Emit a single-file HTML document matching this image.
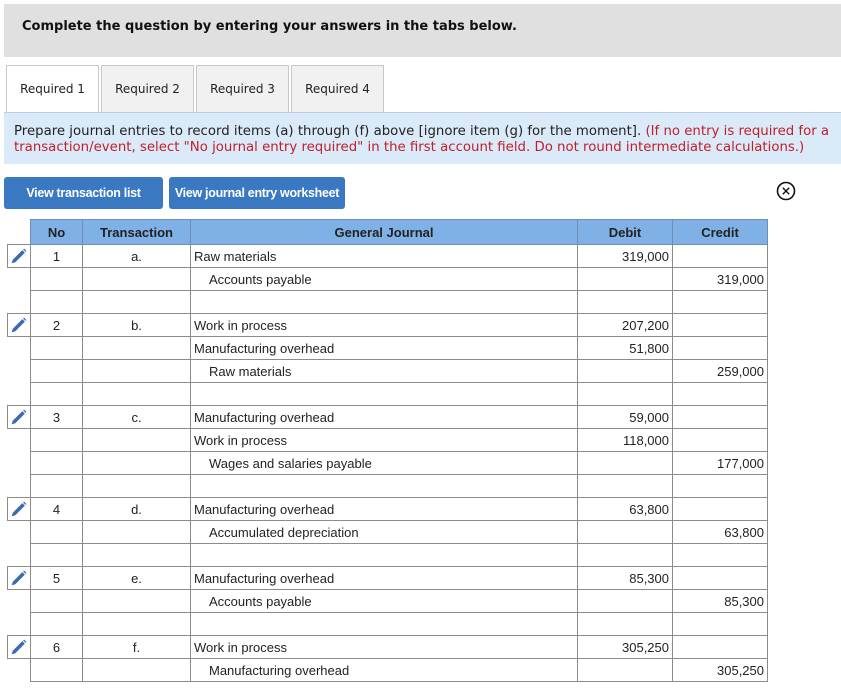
<!DOCTYPE html>
<html><head><style>
body{margin:0;background:#fff;width:841px;height:689px;overflow:hidden;position:relative;font-family:"DejaVu Sans",Verdana,sans-serif}
.top{position:absolute;left:4px;top:4px;width:837px;height:53px;background:#e0e0e0}
.top span{position:absolute;left:18px;top:15px;font-weight:bold;font-size:13px;color:#111}
.tab{position:absolute;top:65px;height:47px;border:1px solid #c8c8c8;border-bottom:none;background:#f1f1f1;font-size:12px;color:#222;box-sizing:border-box;text-align:center;line-height:47px}
.tab.a{background:#fff;height:48px}
.info{position:absolute;left:4px;top:112px;width:837px;height:52px;background:#dbeaf8;border-top:1px solid #b8cde0;box-sizing:border-box;font-size:13.3px;line-height:16px;padding:11px 0 0 10px;color:#222}
.info .r{color:#c0202a}
.btn{position:absolute;top:177px;height:32px;background:#3a78c2;border-radius:3px;color:#fff;font:bold 12.5px "Liberation Sans",Arial,sans-serif;line-height:32px;text-align:center;letter-spacing:-0.3px}
table{position:absolute;left:7px;top:219px;border-collapse:collapse;font:13px "Liberation Sans",Arial,sans-serif;color:#222}
td,th{border:1px solid #8c8c8c;height:23px;padding:0 3px;box-sizing:border-box}
th{background:#7fb0e6;font-weight:bold;height:25px;border-color:#6f8fb8}
tr td:first-child,tr th:first-child{border-left:none;border-top:none;border-bottom:none;background:#fff}
tr td.p{border:1px solid #8c8c8c}
th:first-child{background:#fff!important}
.c{text-align:center}.n{text-align:right}
.in{padding-left:18px}
</style></head><body>
<div class="top"><span>Complete the question by entering your answers in the tabs below.</span></div>
<div class="tab a" style="left:6px;width:93px">Required 1</div>
<div class="tab" style="left:101px;width:93px">Required 2</div>
<div class="tab" style="left:196px;width:93px">Required 3</div>
<div class="tab" style="left:291px;width:93px">Required 4</div>
<div class="info">Prepare journal entries to record items (a) through (f) above [ignore item (g) for the moment]. <span class="r">(If no entry is required for a transaction/event, select "No journal entry required" in the first account field. Do not round intermediate calculations.)</span></div>
<div class="btn" style="left:4px;width:159px">View transaction list</div>
<div class="btn" style="left:169px;width:176px">View journal entry worksheet</div>
<svg style="position:absolute;left:776px;top:181px" width="20" height="20"><circle cx="10" cy="10" r="8.5" fill="none" stroke="#111" stroke-width="1.6"/><path d="M6.8 6.8L13.2 13.2M13.2 6.8L6.8 13.2" stroke="#111" stroke-width="1.4"/></svg>
<table>
<colgroup><col style="width:23px"><col style="width:52px"><col style="width:108px"><col style="width:387px"><col style="width:95px"><col style="width:95px"></colgroup>
<tr><th></th><th>No</th><th>Transaction</th><th>General Journal</th><th>Debit</th><th>Credit</th></tr>
<tr><td>P</td><td class="c">1</td><td class="c">a.</td><td>Raw materials</td><td class="n">319,000</td><td></td></tr>
<tr><td></td><td></td><td></td><td class="in">Accounts payable</td><td></td><td class="n">319,000</td></tr>
<tr><td></td><td></td><td></td><td></td><td></td><td></td></tr>
<tr><td>P</td><td class="c">2</td><td class="c">b.</td><td>Work in process</td><td class="n">207,200</td><td></td></tr>
<tr><td></td><td></td><td></td><td>Manufacturing overhead</td><td class="n">51,800</td><td></td></tr>
<tr><td></td><td></td><td></td><td class="in">Raw materials</td><td></td><td class="n">259,000</td></tr>
<tr><td></td><td></td><td></td><td></td><td></td><td></td></tr>
<tr><td>P</td><td class="c">3</td><td class="c">c.</td><td>Manufacturing overhead</td><td class="n">59,000</td><td></td></tr>
<tr><td></td><td></td><td></td><td>Work in process</td><td class="n">118,000</td><td></td></tr>
<tr><td></td><td></td><td></td><td class="in">Wages and salaries payable</td><td></td><td class="n">177,000</td></tr>
<tr><td></td><td></td><td></td><td></td><td></td><td></td></tr>
<tr><td>P</td><td class="c">4</td><td class="c">d.</td><td>Manufacturing overhead</td><td class="n">63,800</td><td></td></tr>
<tr><td></td><td></td><td></td><td class="in">Accumulated depreciation</td><td></td><td class="n">63,800</td></tr>
<tr><td></td><td></td><td></td><td></td><td></td><td></td></tr>
<tr><td>P</td><td class="c">5</td><td class="c">e.</td><td>Manufacturing overhead</td><td class="n">85,300</td><td></td></tr>
<tr><td></td><td></td><td></td><td class="in">Accounts payable</td><td></td><td class="n">85,300</td></tr>
<tr><td></td><td></td><td></td><td></td><td></td><td></td></tr>
<tr><td>P</td><td class="c">6</td><td class="c">f.</td><td>Work in process</td><td class="n">305,250</td><td></td></tr>
<tr><td></td><td></td><td></td><td class="in">Manufacturing overhead</td><td></td><td class="n">305,250</td></tr>
</table>
<script>
document.querySelectorAll('td').forEach(function(t){if(t.textContent==='P'){t.className='p';t.innerHTML='<svg width="17" height="17" viewBox="0 0 16 16" style="display:block"><path d="M1.5 14.5L2.6 11L11.6 2L14 4.4L5 13.4Z" fill="#3a6db0"/><path d="M12.3 1.3L13.3 0.6L15.4 2.7L14.7 3.7Z" fill="#3a6db0"/></svg>';t.style.padding='0 0 0 2px';}});
</script>
</body></html>
